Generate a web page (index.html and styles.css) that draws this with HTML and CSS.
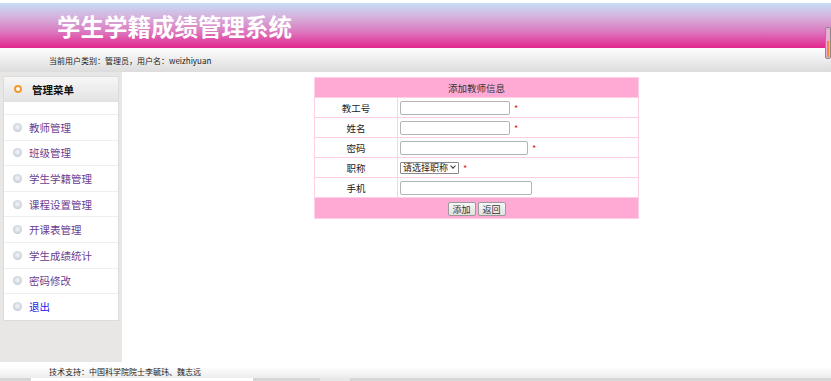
FILE: index.html
```html
<!DOCTYPE html>
<html lang="zh-CN">
<head>
<meta charset="utf-8">
<title>学生学籍成绩管理系统</title>
<link rel="stylesheet" href="styles.css">
</head>
<body>
<div class="page">
  <div class="top-gap"></div>
  <header class="banner">
    <h1 class="title">学生学籍成绩管理系统</h1>
  </header>
  <div class="subbar">当前用户类别：管理员，用户名：weizhiyuan</div>
  <div class="main">
    <aside class="sidebar">
      <div class="panel">
        <div class="panel-head">
          <span class="ring"></span>
          <span class="panel-title">管理菜单</span>
        </div>
        <div class="menu-blank"></div>
        <ul class="menu">
          <li class="menu-item"><span class="dot"></span><a class="menu-link" href="#">教师管理</a></li>
          <li class="menu-item"><span class="dot"></span><a class="menu-link" href="#">班级管理</a></li>
          <li class="menu-item"><span class="dot"></span><a class="menu-link" href="#">学生学籍管理</a></li>
          <li class="menu-item"><span class="dot"></span><a class="menu-link" href="#">课程设置管理</a></li>
          <li class="menu-item"><span class="dot"></span><a class="menu-link" href="#">开课表管理</a></li>
          <li class="menu-item"><span class="dot"></span><a class="menu-link" href="#">学生成绩统计</a></li>
          <li class="menu-item"><span class="dot"></span><a class="menu-link" href="#">密码修改</a></li>
          <li class="menu-item"><span class="dot"></span><a class="menu-link exit" href="#">退出</a></li>
        </ul>
      </div>
    </aside>
    <section class="content">
      <table class="form-table">
        <tr><td class="form-head" colspan="2">添加教师信息</td></tr>
        <tr>
          <td class="label">教工号</td>
          <td class="field"><input class="txt w110" type="text"><span class="req">*</span></td>
        </tr>
        <tr>
          <td class="label">姓名</td>
          <td class="field"><input class="txt w110" type="text"><span class="req">*</span></td>
        </tr>
        <tr>
          <td class="label">密码</td>
          <td class="field"><input class="txt w128" type="password"><span class="req">*</span></td>
        </tr>
        <tr>
          <td class="label">职称</td>
          <td class="field"><span class="sel-wrap"><select class="sel"><option>请选择职称</option></select></span><span class="req">*</span></td>
        </tr>
        <tr>
          <td class="label">手机</td>
          <td class="field"><input class="txt w132" type="text"></td>
        </tr>
        <tr>
          <td class="form-foot" colspan="2"><button class="btn" type="button">添加</button><button class="btn" type="button">返回</button></td>
        </tr>
      </table>
    </section>
  </div>
  <footer class="footer">技术支持：中国科学院院士李毓玮、魏志远</footer>
  <div class="hbar"><span class="hbar-thumb"></span><span class="hbar-thumb2"></span></div>
  <div class="vscroll"><span class="vscroll-fill"></span></div>
</div>
</body>
</html>
```

FILE: styles.css
```css
* { box-sizing: border-box; }
html, body { margin: 0; padding: 0; }
body {
  font-family: "Noto Sans CJK SC", "Noto Sans", sans-serif;
  background: #fff;
  color: #222;
}
.page {
  position: relative;
  width: 831px;
  height: 381px;
  display: flex;
  flex-direction: column;
  overflow: hidden;
}
.top-gap { height: 3px; background: #fff; }
.banner {
  height: 45px;
  background: linear-gradient(to bottom, #c6ddf7 0%, #d5b3dd 30%, #db7dc1 62%, #e2268d 100%);
  display: flex;
  align-items: center;
  padding-left: 57px;
  padding-top: 3px;
}
.title {
  margin: 0;
  font-size: 23.5px;
  font-weight: bold;
  color: #fff;
  line-height: 1;
}
.subbar {
  height: 24px;
  background: linear-gradient(to bottom, #fdfdfd, #dcdcdc);
  font-size: 8px;
  color: #222;
  display: flex;
  align-items: center;
  padding-left: 49px;
}
.main {
  height: 290px;
  display: flex;
}
.sidebar {
  width: 122px;
  background: #e9e7e5;
  padding: 4px 3px 0 3px;
}
.panel {
  width: 116px;
  background: #fff;
  border: 1px solid #dcdcdc;
}
.panel-head {
  height: 25px;
  background: linear-gradient(to bottom, #f7f7f7, #e3e3e3);
  display: flex;
  align-items: center;
  padding-left: 10px;
  border-bottom: 1px solid #e0e0e0;
}
.ring {
  width: 8px;
  height: 8px;
  border-radius: 50%;
  border: 2px solid #f29a2e;
  background: #fff;
  margin-right: 10px;
}
.panel-title {
  font-size: 10.5px;
  font-weight: bold;
  color: #111;
}
.menu-blank {
  height: 13px;
  border-bottom: 1px solid #eee;
}
.menu {
  list-style: none;
  margin: 0;
  padding: 0;
}
.menu-item {
  height: 25.6px;
  display: flex;
  align-items: center;
  padding-left: 9px;
  border-bottom: 1px solid #eeeeee;
}
.menu-item:last-child { border-bottom: none; }
.dot {
  width: 9px;
  height: 9px;
  border-radius: 50%;
  background: radial-gradient(circle at 50% 45%, #f4f6fa 0%, #d3d8e0 55%, #a9b0bb 100%);
  margin-right: 7px;
}
.menu-link {
  font-size: 10.5px;
  color: #6b3d8f;
  text-decoration: none;
}
.menu-link.exit { color: #1a1aee; }
.content {
  flex: 1;
  padding-top: 5px;
  display: flex;
  justify-content: center;
  align-items: flex-start;
}
.form-table {
  width: 325px;
  border-collapse: separate;
  border-spacing: 1px;
  background: #ffcfe6;
  font-size: 9.5px;
}
.form-table td { background: #fff; padding: 0; }
.form-head {
  height: 19px;
  background: #ffaad5 !important;
  text-align: center;
  color: #333;
}
.label {
  width: 82px;
  height: 19px;
  text-align: center;
  color: #222;
}
.field {
  padding-left: 2px !important;
}
.txt {
  height: 14px;
  border: 1px solid #b4b4b4;
  border-radius: 2px;
  padding: 0 2px;
  font-size: 9px;
  vertical-align: middle;
  margin: 0;
}
.w110 { width: 110px; }
.w128 { width: 128px; }
.w132 { width: 132px; }
.sel-wrap {
  position: relative;
  display: inline-block;
  vertical-align: middle;
  width: 59px;
  height: 12px;
}
.sel-wrap::after {
  content: "";
  position: absolute;
  right: 4px;
  top: 2px;
  width: 3px;
  height: 3px;
  border-right: 1px solid #333;
  border-bottom: 1px solid #333;
  transform: rotate(45deg);
  pointer-events: none;
}
.sel {
  -webkit-appearance: none;
  appearance: none;
  display: block;
  height: 12px;
  width: 59px;
  font-size: 9px;
  line-height: 10px;
  padding: 0 0 0 2px;
  border: 1px solid #8a8a8a;
  border-radius: 1px;
  margin: 0;
  font-family: "Noto Sans CJK SC", sans-serif;
  background: #fff;
  color: #222;
}
.req {
  color: #e02020;
  font-size: 9px;
  margin-left: 4px;
  vertical-align: middle;
}
.form-foot {
  height: 20px;
  background: #ffaad5 !important;
  text-align: center;
}
.btn {
  height: 14px;
  width: 28px;
  padding: 0;
  margin: 0 1px;
  font-size: 9px;
  font-family: "Noto Sans CJK SC", sans-serif;
  background: linear-gradient(#f6f6f6, #e2e2e2);
  border: 1px solid #9a9a9a;
  border-radius: 2px;
  color: #333;
  vertical-align: middle;
}
.footer {
  height: 16px;
  background: linear-gradient(to bottom, #ffffff 30%, #ececec);
  font-size: 8px;
  color: #222;
  display: flex;
  align-items: flex-end;
  padding-left: 49px;
  padding-bottom: 1px;
}
.hbar {
  height: 3px;
  background: #d6d6d6;
  position: relative;
}
.hbar-thumb {
  position: absolute;
  left: 31px;
  width: 222px;
  top: 0;
  height: 3px;
  background: #fff;
}
.hbar-thumb2 {
  position: absolute;
  left: 320px;
  width: 30px;
  top: 0;
  height: 3px;
  background: #e8e8e8;
}
.vscroll {
  position: absolute;
  left: 825px;
  top: 27px;
  width: 6px;
  height: 32px;
  border: 1px solid #8a8a8a;
  border-radius: 2px;
  background: #e8b0d6;
  overflow: hidden;
}
.vscroll-fill {
  position: absolute;
  left: 1px;
  right: 1px;
  top: 13px;
  bottom: 1px;
  background: #f08a3a;
}
```
